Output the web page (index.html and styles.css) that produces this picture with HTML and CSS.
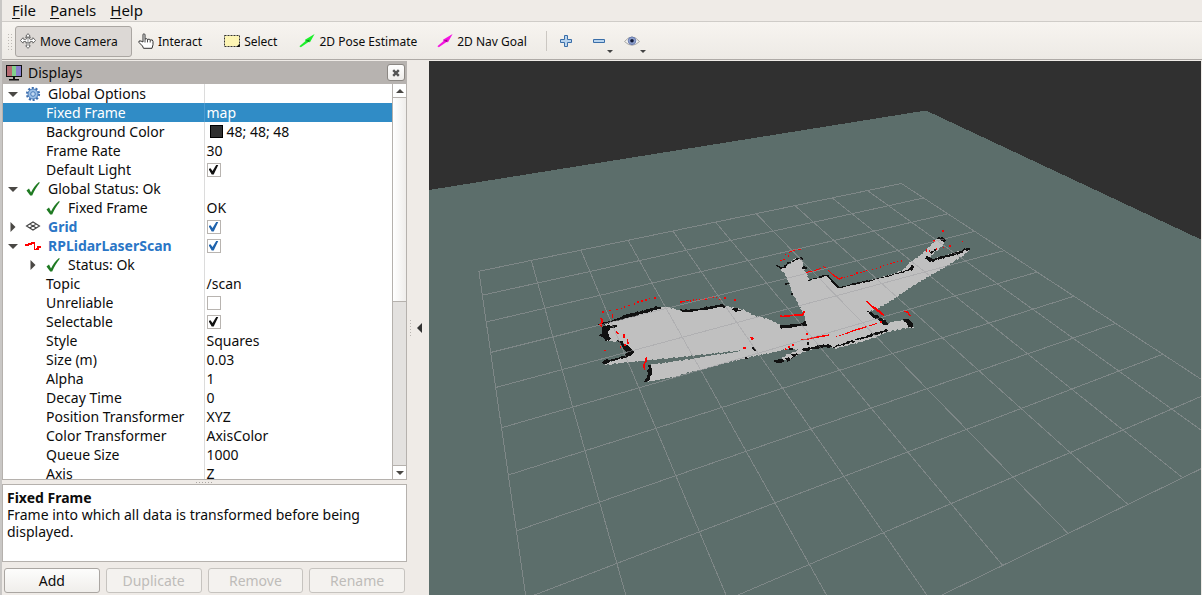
FILE: index.html
```
<!DOCTYPE html>
<html lang="en">
<head>
<meta charset="utf-8">
<title>RViz</title>
<link rel="stylesheet" href="styles.css">
</head>
<body>
<svg class="defs" aria-hidden="true">
  <symbol id="check" viewBox="0 0 16 16"><path d="M1.500 9.500L4 7.600l2 4C8 7 10.500 4 14 1l.8.700C11.700 5.500 9.300 9.500 7.200 14.500H5.200z" fill="#1f7a22"/></symbol>
  <symbol id="down" viewBox="0 0 12 12"><path d="M1 4h10L6 9z" fill="#4a4845"/></symbol>
  <symbol id="right" viewBox="0 0 12 12"><path d="M3.500 1v10L8.500 6z" fill="#4a4845"/></symbol>
</svg>
<div class="window">
  <nav class="menubar">
    <button type="button"><u>F</u>ile</button>
    <button type="button"><u>P</u>anels</button>
    <button type="button"><u>H</u>elp</button>
  </nav>

  <div class="toolbar" role="toolbar">
    <span class="grip"></span>
    <button type="button" class="tool active">
      <svg class="icon" viewBox="0 0 16 16"><path d="M8 .6l2.200 2.600H9v2.200l1.800 1.200L13 5.800V4.700L15.500 7.500 13 10.200V9l-2.200-.8L9 9.800v3h1.300L8 15.400l-2.300-2.600H7v-3L5.200 8.200 3 9v1.200L.5 7.500 3 4.700v1.100l2.200.8L7 5.400V3.200H5.800z" fill="#fff" stroke="#5c5c5c" stroke-width=".9"/><path d="M5 4.500h6M5 9.700h6M8 4v6" stroke="#777" stroke-width=".8"/></svg>
      Move Camera</button>
    <button type="button" class="tool">
      <svg class="icon" viewBox="0 0 16 16"><path d="M5 9V1.800q0-1 .9-1T7 1.800V6q2-.8 2.500.4 2-.7 2.700.5 2.800-.7 2.800 1.600v3.200L14 15.300H5.500L4.500 13 1 9.500V8h2z" fill="#fff" stroke="#333" stroke-width="1"/><path d="M7 6v3.500M9.500 6.400v3M12.200 7v2.500" stroke="#333" stroke-width=".9"/></svg>
      Interact</button>
    <button type="button" class="tool">
      <svg class="icon" viewBox="0 0 16 16"><path d="M.5 2.500h15v11H.5z" fill="#fdf5b4" stroke="#333" stroke-dasharray="2 1"/><path d="M15.800 10.500v3.500h-3.500z" fill="#111"/></svg>
      Select</button>
    <button type="button" class="tool pose">
      <svg class="icon" viewBox="0 0 16 16"><path d="M.4 13.200L6.500 8 6 6.800 15.600 1 11 9.300 9.500 9 1.800 14.300z" fill="#1df02c"/><path d="M6.500 7.800l4-1.300L10 9z" fill="#0c9620"/></svg>
      2D Pose Estimate</button>
    <button type="button" class="tool pose">
      <svg class="icon" viewBox="0 0 16 16"><path d="M.4 13.200L6.500 8 6 6.800 15.600 1 11 9.300 9.500 9 1.800 14.300z" fill="#f414e0"/><path d="M6.500 7.800l4-1.300L10 9z" fill="#a3008f"/></svg>
      2D Nav Goal</button>
    <span class="divider"></span>
    <button type="button" class="mini" aria-label="Add tool">
      <svg class="icon" viewBox="0 0 16 16"><path d="M6.500 2.500h3v4h4v3h-4v4h-3v-4h-4v-3h4z" fill="#b9d4ee" stroke="#3a6ea8"/></svg></button>
    <button type="button" class="mini" aria-label="Remove tool">
      <svg class="icon" viewBox="0 0 16 16"><path d="M2.500 6.500h11v3h-11z" fill="#b9d4ee" stroke="#3a6ea8"/></svg><span class="caret"></span></button>
    <button type="button" class="mini" aria-label="Tool visibility">
      <svg class="icon" viewBox="0 0 16 16"><path d="M.5 8.500Q8-.5 15.500 8.500 8 16 .5 8.500z" fill="#f3f3f1" stroke="#aaa8a4"/><circle cx="8" cy="7.800" r="3.800" fill="#8ea0cc" stroke="#6a7db0"/><circle cx="8" cy="7.800" r="1.800" fill="#111a38"/></svg><span class="caret"></span></button>
  </div>

  <main class="content">
    <section class="dock">
      <header class="dock-title">
        <svg class="icon" viewBox="0 0 16 16"><path d="M0 0h16v12H0z" fill="#111"/><path d="M1 1h5v10H1z" fill="#b56a72"/><path d="M6 1h4v10H6z" fill="#83cf8c"/><path d="M10 1h5v10h-5z" fill="#8880cc"/><path d="M7 12h2v2H7zM3 14h10v1.500H3z" fill="#111"/></svg>
        <h1>Displays</h1>
        <button type="button" class="close" aria-label="Close"><svg viewBox="0 0 8 8"><path d="M1.200 1.200l5.600 5.600M6.800 1.200L1.200 6.800" stroke="#555" stroke-width="2.400"/></svg></button>
      </header>

      <div class="tree">
        <div class="tree-view">
          <table>
            <tbody>
            <tr><td><div class="item"><svg class="arrow"><use href="#down"/></svg><svg class="icon" viewBox="0 0 16 16"><circle cx="8" cy="8" r="5.900" fill="none" stroke="#3d6eae" stroke-width="2.400" stroke-dasharray="2 1.700"/><circle cx="8" cy="8" r="5" fill="#9dc0e6" stroke="#4a7cba"/><circle cx="8" cy="8" r="2.300" fill="#c3daf2" stroke="#4a7cba"/></svg>Global Options</div></td><td></td></tr>
            <tr class="selected"><td><div class="item leaf">Fixed Frame</div></td><td>map</td></tr>
            <tr><td><div class="item leaf">Background Color</div></td><td><div class="color"><span class="swatch"></span>48; 48; 48</div></td></tr>
            <tr><td><div class="item leaf">Frame Rate</div></td><td>30</td></tr>
            <tr><td><label class="item leaf" for="light">Default Light</label></td><td><input type="checkbox" id="light" checked></td></tr>
            <tr><td><div class="item"><svg class="arrow"><use href="#down"/></svg><svg class="icon"><use href="#check"/></svg>Global Status: Ok</div></td><td></td></tr>
            <tr><td><div class="item nested"><span class="arrow"></span><svg class="icon"><use href="#check"/></svg>Fixed Frame</div></td><td>OK</td></tr>
            <tr><td><label class="item display" for="grid-on"><svg class="arrow"><use href="#right"/></svg><svg class="icon" viewBox="0 0 16 16"><path d="M1.500 7L8 3l6.500 4L8 11zM4.700 5l6.600 4M11.300 5L4.700 9" fill="none" stroke="#444" stroke-width="1.100"/></svg>Grid</label></td><td><input type="checkbox" class="blue" id="grid-on" checked></td></tr>
            <tr><td><label class="item display" for="scan-on"><svg class="arrow"><use href="#down"/></svg><svg class="icon" viewBox="0 0 16 16"><path d="M0 6h3v-1h3v-1h4v7h2v1h-3V6H7v1H4v1H0zM11 10h1V8h4v2h-2v2h-3z" fill="#f00"/></svg>RPLidarLaserScan</label></td><td><input type="checkbox" class="blue" id="scan-on" checked></td></tr>
            <tr><td><div class="item nested"><svg class="arrow"><use href="#right"/></svg><svg class="icon"><use href="#check"/></svg>Status: Ok</div></td><td></td></tr>
            <tr><td><div class="item leaf">Topic</div></td><td>/scan</td></tr>
            <tr><td><label class="item leaf" for="unreliable">Unreliable</label></td><td><input type="checkbox" id="unreliable"></td></tr>
            <tr><td><label class="item leaf" for="selectable">Selectable</label></td><td><input type="checkbox" id="selectable" checked></td></tr>
            <tr><td><div class="item leaf">Style</div></td><td>Squares</td></tr>
            <tr><td><div class="item leaf">Size (m)</div></td><td>0.03</td></tr>
            <tr><td><div class="item leaf">Alpha</div></td><td>1</td></tr>
            <tr><td><div class="item leaf">Decay Time</div></td><td>0</td></tr>
            <tr><td><div class="item leaf">Position Transformer</div></td><td>XYZ</td></tr>
            <tr><td><div class="item leaf">Color Transformer</div></td><td>AxisColor</td></tr>
            <tr><td><div class="item leaf">Queue Size</div></td><td>1000</td></tr>
            <tr><td><div class="item leaf">Axis</div></td><td>Z</td></tr>
            </tbody>
          </table>
        </div>
        <div class="scrollbar">
          <span class="step up"></span>
          <span class="thumb"></span>
          <span class="track"></span>
          <span class="step"></span>
        </div>
      </div>

      <div class="h-splitter"><span class="h-grip"></span></div>
      <div class="description">
        <h2>Fixed Frame</h2>
        <p>Frame into which all data is transformed before being displayed.</p>
      </div>
      <div class="actions">
        <button type="button">Add</button>
        <button type="button" disabled>Duplicate</button>
        <button type="button" disabled>Remove</button>
        <button type="button" disabled>Rename</button>
      </div>
    </section>

    <div class="v-splitter"><span class="v-grip"></span><span class="collapse"></span></div>

    <svg class="scene" viewBox="429 61 772 534" preserveAspectRatio="xMidYMin slice" shape-rendering="crispEdges">
      <path d="M429 190L926 110.500 1202 240V596H429z" fill="#5c6e6b"/>
      <g transform="translate(580 270) scale(.33333)">
        <path class="free" d="M70 162L110 150 180 130 235 112 262 112 300 123 350 120 430 108 455 113 490 120 520 137 560 150 605 168 670 168V225L620 235 560 250 500 262 470 270 440 277 400 288 365 298 330 305 290 318 250 326 215 331 205 333 215 285 260 279 320 270 400 257 470 247 500 241 480 240 420 247 330 257 260 264 190 271 140 276 75 284 100 273 135 260 158 248 150 232 125 213 95 213 78 210 85 170z"/>
        <path class="wall" d="M55 164l10-4 15-4 15-4 15-5 14-6 14-8 16-3 16-4 15-2 15-6 18-4 12-5 12 3v3l-14 4-16 5-14 4-20 5-13 7-17 1-18 6-14 4-16 2-12 6-18 5zM66 172l20-7 8 4 12-5 4 4-6 6-14 0-6 10 1 12 6 8-4 8-12-2-4-8-14-5 8-6 2-12zM112 211l14 2 6 10 12 4 12 12 6 8-8 8-14 5-6-6 8-6-10-10zM66 279l10-10 14 1 22-6 20-6 14-2-6 6-18 3-18 7-14 2-14 9zM207 286l7 3 2 18-4 10-4 16-16 4 7-12 5-10-1-12 3-8zM300 120l25-1 20-1 18-3 14-4 18-2 18-4 14-2 10 6-25 2-14 3-16 4-18 2-20 3-16 2-18 1zM456 118l12-5 8 6 8 0-3 4-12 2zM603 165l20 2 20-4 20 0v5l-28 2-18 5-12-2zM517 232l8 1 4 8-7 1zM496 263h8v4h-8zM583 272l12-4 12-1 4 5-8 7-14-1zM618 264l12-8 12 2-7 8-12 5zM620 40l6 2-6 2zM430 107h8v5h-8z"/>
        <path class="scan" d="M66 124h5v5h-5zM87 119h5v5h-5zM108 116h5v5h-5zM122 113h5v4h-5zM131 107h4v7h-4zM144 104h5v4h-5zM161 100h4v4h-4zM171 94h6v5h-6zM184 91h6v5h-6zM196 87h4v6h-4zM206 84h5v4h-5zM222 81h5v5h-5zM300 94l14-2 2 3-15 4zM318 90h8v4h-8zM330 91h4v4h-4zM338 88h5v5h-5zM347 88h5v4h-5zM356 86h5v4h-5zM365 86h6v4h-6zM376 83h6v6h-6zM386 80h10v5h-10zM399 79h4v6h-4zM408 80h4v4h-4zM418 86h4v4h-4zM433 82h5v4h-5zM462 88h5v5h-5zM60 143l7 3 3 8-5 12 2 9-10-10 7-8zM95 132l4-1 1 12h-4zM108 182l3 4 6 4-3 4-4-3zM129 192h5v11h-5zM140 205l5 2 1 16-4-2zM132 221l7 2-2 6-6-2zM119 228h5v5h-5zM72 239h5v5h-5zM197 261l5 1-2 14-5 5 0 18-4 3-1-18 5-10zM510 204l4-4 3 2 5 4-5 6-3-4zM489 231h8v6h-8zM615 235h6v4h-6zM625 228h5v5h-5zM636 222h6v4h-6zM599 137l18 0 22-4 20 0v4l-25 2-20 2h-14z"/>
      </g>
      <g transform="translate(760 225) scale(.33333)">
        <path class="free" d="M0 277L30 285 62 304 95 304 138 292 133 265 118 242 108 220 98 205 93 185 83 160 73 142 62 132 90 118 100 103 124 100 130 130 140 150 147 168 175 160 200 152 238 188 300 176 350 162 400 148 434 133 450 113 480 93 500 75 535 40 552 44 550 58 528 78 505 98 512 105 550 95 590 82 630 73 610 90 560 122 520 145 470 175 435 197 385 232 350 250 325 260 345 275 370 285 380 300 400 290 430 288 440 284 458 306 440 308 410 314 380 320 350 335 290 352 250 364 225 370 210 362 170 370 140 376 110 390 85 402 65 402 80 390 105 382 118 374 90 370 60 374 30 382 0 388z"/>
        <path class="wall" d="M49 121l10 3 4 8 14-6 7-10 16-6 8-9 14-4 8 2v6l-14-2-14 4-10 5-10 1-10 12-18 2zM126 128l8-6 6 8-8 2zM145 167l12-5 12-2 14-7 16-4 6 2 10 12 22 22 16-1 14-4 16-6 18-2 16-5 20-1 12-6 18-3 14-4 20-5 16-6 24-5 10-8 3-8 8 4-5 10-18 3-16 6-20 4-18 6-20 5-18 4-20 6-24 4-16 6-24 3-16 6-14 1-10-10-24-28-18 8-18 2zM76 176h6v4h-6zM92 205h8v5h-8zM498 94l10 3 8 6 14-4 16-6 18-2 14-7 24-4 10-8 10-2 8 1v3l-8 2-8 0-10 8-26 8-14 2-16 6-20 4-10 6-14-2-8-8zM510 82l12-6 8-8v4l-8 8-10 6zM530 40l8-3 16 3 2 8-6 2-8-6zM60 301l16 0 14-1 20-2 16-2 8-8 5 4-1 10-18 1-20 3-14 2-24 2zM322 258l12 4 10 8 12 4 10 8 12 6 6 8-4 5-10-3-8-10-14-8-10-3zM428 284l14-2 12 8 7 10-6 8-10-5-6-10zM220 369l10-8 20-4 14-9 18-3 18-6 14-3 18-9 16-4 18-5 14-4 5 2-10 5-20 6-16 5-16 6-16 3-16 9-20 2-18 8-18 3-16 5zM128 372l14-3 16-2 14-5 16-2 22-1 6 6-8 4-10-4-24 6-20 1-16 6-8-2zM42 408l18-5 12 5-14 6-14-2zM76 401l12-5 2 10-8 4zM94 390l16-5 2 5-14 5zM140 353h8v6h-8zM88 370h10v4h-10z"/>
        <path class="free" d="M282 347l16-2 6 4-14 5z"/>
        <path class="scan" d="M61 104h5v4h-5zM69 102h5v4h-5zM75 87h3v4h-3zM84 89h3v6h-3zM86 81l12-5v3l-10 4zM98 74l7-1v4h-6zM108 73h4v3h-4zM115 71h8v3h-8zM138 141l10-3 10 0 8-4 10-3v4l-12 3-12 3-12 3zM178 128h5v4h-5zM188 124l8 1 8 9 16 14 18 12 10-4v3l-10 5-16-10-14-14-10-12-10-1zM251 156h4v4h-4zM260 152h4v4h-4zM270 149h8v4h-8zM281 146h4v4h-4zM288 141h5v7h-5zM300 141h6v4h-6zM310 137h4v5h-4zM318 134h5v4h-5zM336 132h4v3h-4zM347 128h4v4h-4zM359 124h4v4h-4zM369 120h4v4h-4zM381 117h4v4h-4zM391 114h4v3h-4zM400 111h4v4h-4zM411 108h4v4h-4zM423 106h4v4h-4zM60 270h6v2l14-1 20-1 26-2 3-9 5-1-1 11-7 4-28 0-22 3h-15zM316 227l6 1 10 10 20 13 19 16v5l-8-4-18-14-14-10zM432 256l8 1 7 6 6 10h-5l-6-9-9-4zM124 343l16-2 24-6 20-3 22-4v5l-22 3-20 4-24 5-14 1zM226 333l14-2 20-8 20-8 20-6 20-6v4l-18 6-22 6-18 7-22 6-12 4zM326 301l10-2 16-6v3l-14 5-10 3zM360 289h7v5h-7zM139 323h5v6h-5zM96 357h5v5h-5zM84 364h6v4h-6zM76 370l6 1-3 4h-4zM546 15l6 1-2 5-4-1zM606 47h3v4h-3zM520 46h5v4h-5zM568 60l5 1v6l-5-2zM498 72l3 0v8h-3zM506 76h5v5h-5zM527 70h4v5h-4zM549 66h4v4h-4z"/>
      </g>
      <path class="grid" id="grid-lines"/>
    </svg>
  </main>
</div>
<script src="scene.js"></script>
</body>
</html>
```
FILE: styles.css
```
* { box-sizing: border-box; }
body { margin: 0; font: 14px/19px "Noto Sans", "Open Sans", sans-serif; color: #0c0c0c; background: #c9c7c5; }
button { font: inherit; color: inherit; margin: 0; }
h1, h2, p { margin: 0; font-size: inherit; }
.defs { position: absolute; width: 0; height: 0; }
.icon { width: 16px; height: 16px; flex: none; display: block; }

.window { height: 100vh; display: flex; flex-direction: column; margin-left: 2px; background: #efebe7; }

.menubar { display: flex; gap: 14px; height: 22px; padding: 0 10px; border-bottom: 1px solid #cfccc8; flex: none; font-size: 15px; }
.menubar button { border: 0; background: none; padding: 0; line-height: 21px; }
.menubar u { text-underline-offset: 2px; }

.toolbar { display: flex; align-items: center; height: 38px; flex: none; padding: 1px 5px 0; font-size: 12px; background: linear-gradient(#f7f4f0, #edeae5); border-bottom: 1px solid #aeaaa6; }
.grip { width: 5px; height: 17px; margin-right: 3px; background: radial-gradient(circle, #bdb9b4 1px, transparent 1px) 0 0 / 3px 3px; }
.tool { display: flex; align-items: center; gap: 4px; height: 31px; padding: 0 4px; border: 1px solid transparent; border-radius: 3px; background: none; white-space: nowrap; margin-right: 12px; }
.tool.active { width: 117px; margin-right: 1px; background: #dcd8d5; border-color: #aaa6a2; }
.tool.pose { margin-right: 10px; }
.divider { width: 1px; height: 20px; background: #cbc7c2; margin: 0 8px 0 4px; }
.mini { position: relative; width: 23px; height: 26px; padding: 0 3px; border: 0; background: none; margin-right: 10px; }
.caret { position: absolute; right: -2px; bottom: 1px; border: 3px solid transparent; border-top-color: #444; border-bottom: 0; }

.content { flex: 1; min-height: 0; display: flex; padding: 1px 1px 0 0; }
.dock { width: 405px; flex: none; display: flex; flex-direction: column; }
.dock-title { display: flex; align-items: center; height: 23px; flex: none; gap: 6px; padding: 0 2px 0 4px; background: #b7b3b0; }
.dock-title h1 { flex: 1; font-weight: 400; }
.close { display: flex; align-items: center; justify-content: center; width: 18px; height: 17px; padding: 0; border: 1px solid #8b8783; border-radius: 3px; background: linear-gradient(#fff, #eeecea); }
.close svg { width: 8px; height: 8px; }

.tree { flex: 1; min-height: 0; display: flex; background: #fff; border: 1px solid #b5b1ad; border-top: 0; }
.tree-view { flex: 1; min-width: 0; overflow: hidden; }
table { width: 100%; border-collapse: collapse; table-layout: fixed; }
td { height: 19px; padding: 0 0 0 2px; white-space: nowrap; }
td:first-child { width: 201px; padding: 0; border-right: 1px solid #dcdcdc; }
.item { display: flex; align-items: center; height: 19px; padding-left: 4px; }
.item .icon { margin: 0 7px 0 6px; }
.item.leaf { padding-left: 43px; }
.item.nested { padding-left: 24px; }
.item.display { color: #2a76c6; font-weight: 700; }
.arrow { width: 12px; height: 12px; flex: none; }
.selected { background: #308cc6; color: #fff; }
.selected td:first-child { border-color: #4a9ad0; }
.color { display: flex; align-items: center; gap: 4px; padding-left: 3px; }
.swatch { width: 13px; height: 13px; background: #303030; border: 1px solid #000; }
input[type="checkbox"] { appearance: none; display: block; width: 14px; height: 14px; margin: 0; border: 1px solid #b8b4b0; background: #fff; color: #111; }
input.blue { color: #1f63ad; }
input[type="checkbox"]:checked::before { content: ""; display: block; width: 10px; height: 10px; margin: 1px; background: currentColor; clip-path: polygon(0 45%, 20% 38%, 40% 65%, 80% 0, 100% 0, 52% 100%, 32% 100%); }

.scrollbar { width: 14px; display: flex; flex-direction: column; border-left: 1px solid #b5b1ad; background: #fff; }
.step { height: 13px; display: flex; align-items: center; justify-content: center; }
.step::before { content: ""; border: 4px solid transparent; border-top-color: #4a4845; border-bottom: 0; }
.step.up::before { border: 4px solid transparent; border-bottom-color: #4a4845; border-top: 0; }
.thumb { flex: 204; border: solid #b5b1ad; border-width: 1px 0; background: linear-gradient(to right, #fff, #efedeb); }
.track { flex: 164; background: #e3e1df; border-bottom: 1px solid #b5b1ad; }

.h-splitter { height: 4px; flex: none; display: flex; align-items: center; justify-content: center; }
.h-grip { width: 17px; height: 1px; background: repeating-linear-gradient(to right, #aaa6a2 0 1px, transparent 1px 3px); }
.description { height: 78px; flex: none; background: #fff; border: 1px solid #b5b1ad; padding: 4px; line-height: 17px; }
.description h2 { font-weight: 700; }
.actions { display: flex; gap: 6px; padding: 6px 2px 2px; flex: none; }
.actions button { flex: 1; height: 25px; padding: 0; border: 1px solid #aaa6a2; border-radius: 3px; background: linear-gradient(#fdfdfc, #f0eeeb); }
.actions button:disabled { color: #bebcb9; border-color: #c6c3bf; background: #f4f2ef; }

.v-splitter { width: 22px; flex: none; display: flex; align-items: center; gap: 6px; padding-left: 3px; }
.v-grip { width: 1px; height: 17px; background: repeating-linear-gradient(#b8b4b0 0 1px, transparent 1px 3px); }
.collapse { border: 5px solid transparent; border-right-color: #333; border-left: 0; }

.scene { flex: 1; min-width: 0; height: 100%; display: block; background: #303030; }
.free { fill: #c0c0c0; stroke: #c0c0c0; stroke-width: 4; stroke-dasharray: 8 7 12 6; }
.wall { fill: #111; stroke: #111; stroke-width: 3; stroke-dasharray: 6 9; }
.scan { fill: #f00; }
.grid { fill: none; stroke: #a0a0a4; stroke-opacity: .5; stroke-width: 1; }
```
FILE: scene.js
```
// Projects a 10 x 10 ground grid into the camera view.
function project(u, v) {
  const w = 1 + 0.02738 * u - 0.05611 * v;
  const x = (66.93 * u - 23.62 * v + 478.9) / w;
  const y = (-3.75 * u + 7.3 * v + 271.3) / w;
  return x.toFixed(1) + " " + y.toFixed(1);
}
let d = "";
for (let i = 0; i <= 10; i++) {
  d += "M" + project(i, 0) + "L" + project(i, 10);
  d += "M" + project(0, i) + "L" + project(10, i);
}
document.getElementById("grid-lines").setAttribute("d", d);
```
